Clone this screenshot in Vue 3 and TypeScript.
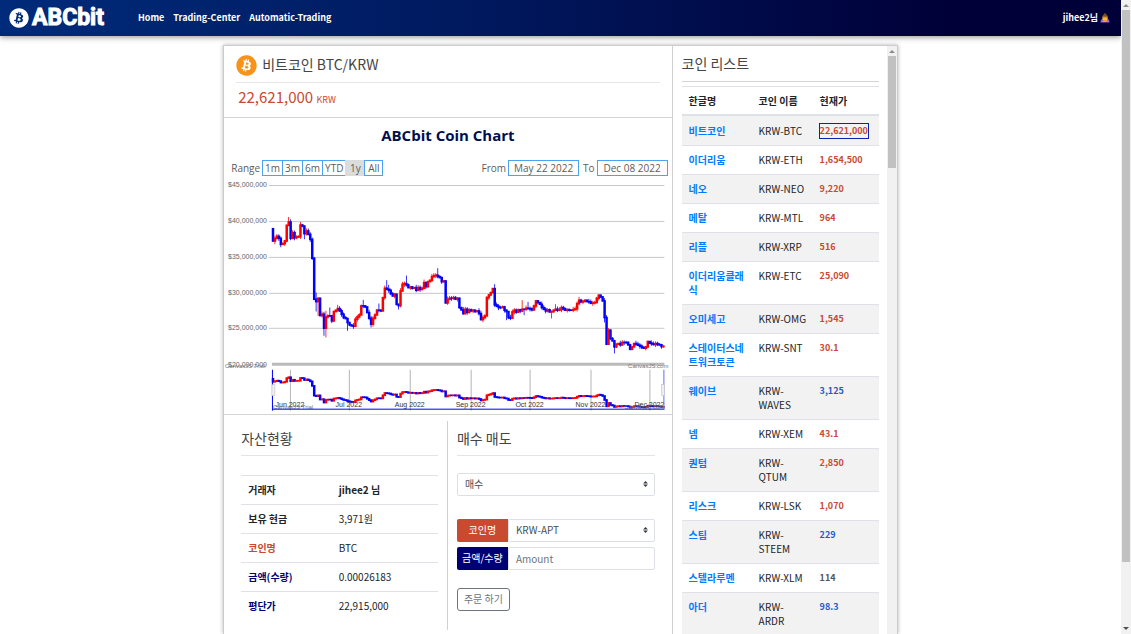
<script setup lang="ts">
import { computed, ref } from 'vue'

interface Coin {
  name: string
  market: string
  price: string
  trend: 'up' | 'down' | 'flat'
}

const coins: Coin[] = [
  { name: '비트코인', market: 'KRW-BTC', price: '22,621,000', trend: 'up' },
  { name: '이더리움', market: 'KRW-ETH', price: '1,654,500', trend: 'up' },
  { name: '네오', market: 'KRW-NEO', price: '9,220', trend: 'up' },
  { name: '메탈', market: 'KRW-MTL', price: '964', trend: 'up' },
  { name: '리플', market: 'KRW-XRP', price: '516', trend: 'up' },
  { name: '이더리움클래식', market: 'KRW-ETC', price: '25,090', trend: 'up' },
  { name: '오미세고', market: 'KRW-OMG', price: '1,545', trend: 'up' },
  { name: '스테이터스네트워크토큰', market: 'KRW-SNT', price: '30.1', trend: 'up' },
  { name: '웨이브', market: 'KRW-WAVES', price: '3,125', trend: 'down' },
  { name: '넴', market: 'KRW-XEM', price: '43.1', trend: 'up' },
  { name: '퀀텀', market: 'KRW-QTUM', price: '2,850', trend: 'up' },
  { name: '리스크', market: 'KRW-LSK', price: '1,070', trend: 'up' },
  { name: '스팀', market: 'KRW-STEEM', price: '229', trend: 'down' },
  { name: '스텔라루멘', market: 'KRW-XLM', price: '114', trend: 'flat' },
  { name: '아더', market: 'KRW-ARDR', price: '98.3', trend: 'down' },
]

const ranges = ['1m', '3m', '6m', 'YTD', '1y', 'All']
const activeRange = ref('1y')
const fromDate = ref('May 22 2022')
const toDate = ref('Dec 08 2022')
const side = ref('매수')
const orderCoin = ref('KRW-APT')
const amount = ref('')

// Daily closes as a depth below the top of the chart, three steps to a unit.
const closes = [
  180, 172, 166, 172, 190, 188, 180, 133, 123, 172, 155, 170, 168, 167, 132, 135, 158, 150, 160, 175,
  232, 355, 362, 352, 404, 400, 442, 408, 405, 405, 420, 392, 388, 383, 390, 400, 410, 413, 425, 432,
  435, 436, 415, 408, 402, 375, 375, 378, 395, 412, 430, 412, 402, 388, 388, 390, 350, 322, 325, 328,
  338, 345, 340, 370, 374, 330, 310, 308, 312, 320, 318, 322, 320, 328, 320, 325, 322, 305, 317, 302,
  298, 287, 284, 283, 287, 290, 302, 300, 366, 355, 352, 352, 350, 355, 352, 380, 387, 398, 385, 394,
  387, 390, 388, 392, 390, 398, 416, 410, 405, 350, 342, 335, 323, 372, 376, 380, 380, 378, 388, 392,
  410, 412, 393, 388, 394, 387, 390, 385, 385, 382, 383, 384, 387, 375, 360, 365, 370, 380, 385, 390,
  387, 393, 392, 388, 385, 388, 386, 380, 384, 388, 386, 388, 388, 386, 384, 368, 358, 363, 361, 358,
  362, 363, 367, 366, 365, 352, 343, 348, 360, 410, 490, 448, 473, 480, 498, 490, 488, 492, 485, 485,
  485, 492, 505, 498, 488, 490, 493, 496, 500, 502, 498, 482, 487, 489, 491, 488, 491, 492, 497, 496,
]

// Days whose high or low runs well past the body.
const peaks: Record<number, number> = {
  8: 108, 14: 123, 22: 335, 27: 390, 29: 380, 33: 372, 46: 357, 54: 368, 58: 298, 59: 312, 68: 284,
  77: 296, 84: 262, 113: 310, 127: 358, 130: 363, 144: 370, 156: 348, 172: 445,
}
const troughs: Record<number, number> = {
  1: 190, 4: 199, 16: 175, 22: 392, 23: 405, 26: 465, 27: 470, 38: 450, 41: 444, 50: 440, 64: 386,
  97: 402, 106: 419, 119: 418, 120: 415, 128: 403, 142: 413, 169: 425, 171: 490, 174: 518, 182: 509,
}

const candles = closes.map((close, i) => {
  const open = i === 0 ? 143 : closes[i - 1]
  const top = Math.min(open, close)
  const bottom = Math.max(open, close)
  return {
    x: 273 + i * 1.965,
    top,
    bottom,
    high: peaks[i] ?? top - 1 - ((i * 7) % 8),
    low: troughs[i] ?? bottom + 1 + ((i * 5) % 8),
    color: close < open ? '#ff0000' : '#0000ff',
  }
})

const chartY = (v: number) => 180 + v / 3
const navY = (v: number) => 381 + (v - 180) * 0.0793

const bodies = computed(() =>
  candles.map((c) => ({
    x: c.x - 1.2,
    y: chartY(c.top) - 0.7,
    h: (c.bottom - c.top) / 3 + 1.6,
    wickTop: chartY(c.high),
    wickBottom: chartY(c.low),
    cx: c.x,
    navTop: navY(c.top) - 0.8,
    navH: (c.bottom - c.top) * 0.0793 + 1.7,
    color: c.color,
  })),
)

const gridLines = [
  { y: 184, label: '$45,000,000' },
  { y: 220, label: '$40,000,000' },
  { y: 256, label: '$35,000,000' },
  { y: 292, label: '$30,000,000' },
  { y: 327, label: '$25,000,000' },
]
const months = [
  { x: 290, label: 'Jun 2022' },
  { x: 349, label: 'Jul 2022' },
  { x: 410, label: 'Aug 2022' },
  { x: 471, label: 'Sep 2022' },
  { x: 530, label: 'Oct 2022' },
  { x: 591, label: 'Nov 2022' },
  { x: 650, label: 'Dec 2022' },
]

const bitcoin =
  'M504 256c0 136.967-111.033 248-248 248S8 392.967 8 256 119.033 8 256 8s248 111.033 248 248zm-141.651-35.33c4.937-32.999-20.191-50.739-54.55-62.573l11.146-44.702-27.213-6.781-10.851 43.524c-7.154-1.783-14.502-3.464-21.803-5.13l10.929-43.81-27.198-6.781-11.153 44.686c-5.922-1.349-11.735-2.682-17.377-4.084l.031-.14-37.53-9.37-7.239 29.062s20.191 4.627 19.765 4.913c11.022 2.751 13.014 10.044 12.68 15.825l-12.696 50.925c.76.194 1.744.473 2.829.907-.907-.225-1.876-.473-2.876-.713l-17.796 71.338c-1.349 3.348-4.767 8.37-12.471 6.464.271.395-19.78-4.937-19.78-4.937l-13.51 31.147 35.414 8.827c6.588 1.651 13.045 3.379 19.4 5.006l-11.262 45.213 27.182 6.781 11.153-44.733a1038.209 1038.209 0 0 0 21.687 5.627l-11.115 44.523 27.213 6.781 11.262-45.128c46.404 8.781 81.299 5.239 95.986-36.727 11.834-33.79-.589-53.281-25.004-65.991 17.78-4.098 31.174-15.792 34.747-39.949zm-62.177 87.179c-8.41 33.79-65.308 15.523-83.755 10.943l14.944-59.899c18.446 4.603 77.6 13.717 68.811 48.956zm8.417-87.667c-7.673 30.736-55.031 15.12-70.393 11.292l13.548-54.327c15.363 3.828 64.836 10.973 56.845 43.035z'
</script>

<template>
  <div class="page">
    <div class="view">
      <header class="navbar">
        <a class="brand" href="#" aria-label="ABCbit">
          <svg class="brand-mark" viewBox="0 0 512 512" aria-hidden="true"><path :d="bitcoin" fill="#fff" /></svg>
          <span class="brand-name">ABCbit</span>
        </a>
        <nav class="links">
          <a href="#">Home</a>
          <a href="#">Trading-Center</a>
          <a href="#">Automatic-Trading</a>
        </nav>
        <a class="user" href="#">
          <span>jihee2님</span>
          <svg viewBox="0 0 20 20" aria-hidden="true">
            <path d="M1 19c0-6 3-8 5-8h8c2 0 5 2 5 8z" fill="#8c5fb5" />
            <circle cx="10" cy="3" r="2.6" fill="#7a4a2e" />
            <path d="M4 11c-1-6 2-8 6-8s7 2 6 8z" fill="#7a4a2e" />
            <circle cx="10" cy="11" r="5" fill="#fbb52f" />
            <path d="M5 9c1-3 8-4 10 0-3-1-6-1-10 0z" fill="#7a4a2e" />
            <path d="M2 18l5-3h6l5 3z" fill="#f39a26" />
          </svg>
        </a>
      </header>

      <main class="card">
        <section class="left">
          <div class="summary">
            <h1 class="pair">
              <svg viewBox="0 0 512 512" aria-hidden="true"><path :d="bitcoin" fill="#f7931a" /></svg>
              <span>비트코인 BTC/KRW</span>
            </h1>
            <p class="quote">22,621,000 <small>KRW</small></p>
          </div>

          <div class="chart">
            <h2 class="chart-title">ABCbit Coin Chart</h2>
            <div class="chart-tools">
              <div class="ranges" role="group" aria-label="Range">
                <span class="tool-label">Range</span>
                <button
                  v-for="r in ranges"
                  :key="r"
                  type="button"
                  :class="{ active: r === activeRange }"
                  @click="activeRange = r"
                >{{ r }}</button>
              </div>
              <div class="dates">
                <label for="from">From</label>
                <input id="from" v-model="fromDate" type="text" />
                <label for="to">To</label>
                <input id="to" v-model="toDate" type="text" />
              </div>
            </div>
            <svg class="plot" viewBox="224 178 448 234" role="img" aria-label="BTC price candles">
              <g v-for="g in gridLines" :key="g.label">
                <rect x="269" :y="g.y" width="396" height="1" fill="#c8c8c8" />
                <text x="267" :y="g.y + 2" text-anchor="end" class="axis">{{ g.label }}</text>
              </g>
              <text x="267" y="366" text-anchor="end" class="axis">$20,000,000</text>
              <rect x="272" y="362" width="393" height="3" fill="#bbb" />
              <text x="225" y="367" class="credit">CanvasJS Trial</text>
              <text x="669" y="367" text-anchor="end" class="credit">CanvasJS.com</text>
              <g v-for="(b, i) in bodies" :key="i" :fill="b.color">
                <rect :x="b.cx - 0.4" :y="b.wickTop" width="0.8" :height="b.wickBottom - b.wickTop" />
                <rect :x="b.x" :y="b.y" width="2.5" :height="b.h" />
              </g>
              <rect v-for="m in months" :key="m.label" :x="m.x" y="369" width="1" height="41" fill="#b4b4b4" />
              <rect v-for="(b, i) in bodies" :key="'n' + i" :x="b.x" :y="b.navTop" width="2.5" :height="b.navH" :fill="b.color" />
              <text v-for="m in months" :key="'t' + m.label" :x="m.x" y="406" text-anchor="middle" class="month">{{ m.label }}</text>
              <text x="273" y="408" class="credit">CanvasJS Trial</text>
              <text x="665" y="408" text-anchor="end" class="credit">CanvasJS.com</text>
              <rect x="272" y="369" width="1" height="41" fill="#0000ff" />
              <rect x="272" y="408" width="393" height="1" fill="#0000ff" />
              <rect x="664" y="369" width="1" height="40" fill="#6a6aff" />
              <rect x="272" y="384" width="3" height="11" fill="#eee" stroke="#bbb" stroke-width="0.5" />
              <rect x="662" y="384" width="3" height="11" fill="#eee" stroke="#bbb" stroke-width="0.5" />
            </svg>
          </div>

          <div class="bottom">
            <section class="assets">
              <h2 class="heading">자산현황</h2>
              <table>
                <tbody>
                  <tr><th scope="row">거래자</th><td><b>jihee2 님</b></td></tr>
                  <tr><th scope="row">보유 현금</th><td>3,971원</td></tr>
                  <tr><th scope="row" class="red">코인명</th><td>BTC</td></tr>
                  <tr><th scope="row" class="navy">금액(수량)</th><td>0.00026183</td></tr>
                  <tr><th scope="row" class="navy">평단가</th><td>22,915,000</td></tr>
                </tbody>
              </table>
            </section>

            <form class="order" @submit.prevent>
              <h2 class="heading">매수 매도</h2>
              <div class="field side">
                <select v-model="side" aria-label="매수 매도">
                  <option>매수</option>
                  <option>매도</option>
                </select>
                <svg class="caret" viewBox="0 0 4 5" aria-hidden="true"><path d="M2 0L0 2h4zM2 5L0 3h4z" fill="#343a40" /></svg>
              </div>
              <div class="group">
                <label for="coin" class="bg-red">코인명</label>
                <div class="field">
                  <select id="coin" v-model="orderCoin">
                    <option>KRW-APT</option>
                    <option v-for="c in coins" :key="c.market">{{ c.market }}</option>
                  </select>
                  <svg class="caret" viewBox="0 0 4 5" aria-hidden="true"><path d="M2 0L0 2h4zM2 5L0 3h4z" fill="#343a40" /></svg>
                </div>
              </div>
              <div class="group">
                <label for="amount" class="bg-navy">금액/수량</label>
                <div class="field"><input id="amount" v-model="amount" type="text" placeholder="Amount" /></div>
              </div>
              <button class="submit" type="submit">주문 하기</button>
            </form>
          </div>
        </section>

        <section class="list">
          <div class="list-body">
            <h2 class="heading">코인 리스트</h2>
            <table>
              <colgroup><col class="c-name" /><col class="c-market" /><col /></colgroup>
              <thead>
                <tr><th scope="col">한글명</th><th scope="col">코인 이름</th><th scope="col">현재가</th></tr>
              </thead>
              <tbody>
                <tr v-for="(c, i) in coins" :key="c.market">
                  <td><a href="#">{{ c.name }}</a></td>
                  <td class="market">{{ c.market }}</td>
                  <td><span class="price" :class="[c.trend, { flash: i === 0 }]">{{ c.price }}</span></td>
                </tr>
              </tbody>
            </table>
          </div>
          <div class="scrollbar inner" aria-hidden="true"><i class="arrow"></i><i class="thumb"></i></div>
        </section>
      </main>
    </div>
    <div class="scrollbar outer" aria-hidden="true"><i class="arrow"></i><i class="thumb"></i><i class="arrow down"></i></div>
  </div>
</template>

<style>
html,
body {
  margin: 0;
  overflow: hidden;
}
</style>

<style scoped>
* {
  box-sizing: border-box;
}
.page {
  display: flex;
  height: 100vh;
  overflow: hidden;
  background: #fff;
  color: #212529;
  font: 10px/14px "Noto Sans CJK KR", sans-serif;
}
h1,
h2,
p {
  margin: 0;
}
a {
  text-decoration: none;
}
button,
input,
select {
  font: inherit;
  color: inherit;
}
.view {
  flex: 1;
  min-width: 0;
  display: flex;
  flex-direction: column;
}
.navbar {
  display: flex;
  align-items: center;
  flex: none;
  height: 36px;
  padding: 0 11px 0 9px;
  background: linear-gradient(90deg, #002b7a, #001a60 40%, #000038 85%);
  box-shadow: 0 1px 6px rgba(0, 0, 0, 0.45);
}
.navbar a {
  color: #fff;
  font-size: 9px;
  font-weight: 700;
}
.brand {
  display: flex;
  align-items: center;
  gap: 3px;
  width: 129px;
}
.brand-mark {
  width: 20px;
  height: 20px;
}
.brand-name {
  font: 700 23px/34px "Liberation Sans Narrow", "Roboto", sans-serif;
  -webkit-text-stroke: 1px #fff;
}
.links {
  display: flex;
  gap: 9px;
}
.user {
  display: flex;
  align-items: center;
  gap: 2px;
  margin-left: auto;
}
.user svg {
  width: 10px;
  height: 10px;
}
.card {
  flex: 1;
  min-height: 0;
  display: grid;
  grid-template-columns: 2fr 1fr;
  width: calc(60% + 2px);
  margin: 9px auto 0;
  border: 1px solid #ccc;
  border-bottom: 0;
  box-shadow: 0 0 4px rgba(0, 0, 0, 0.3);
  overflow: hidden;
}
.left {
  border-right: 1px solid #d0d0d0;
  min-width: 0;
}
.summary {
  height: 72px;
  padding: 6px 12px 0;
  border-bottom: 1px solid #d4d4d4;
}
.pair {
  display: flex;
  align-items: center;
  gap: 5px;
  height: 31px;
  padding-bottom: 3px;
  border-bottom: 1px solid #e6e6e6;
  color: #444;
  font-size: 14px;
  font-weight: 400;
}
.pair span {
  padding-bottom: 4px;
}
.pair svg {
  width: 21px;
  height: 21px;
}
.quote {
  padding: 5px 2px;
  color: #c84a31;
  font-size: 15px;
  line-height: 18px;
}
.quote small {
  font-size: 9px;
}
.chart {
  padding-bottom: 1px;
  border-bottom: 1px solid #d4d4d4;
  font-family: "Open Sans", sans-serif;
}
.chart-title {
  padding-top: 5px;
  color: #000f4f;
  font-size: 15px;
  line-height: 24px;
  text-align: center;
}
.chart-tools {
  display: flex;
  justify-content: space-between;
  height: 32px;
  padding: 13px 4px 0 7px;
  color: #5c5c5c;
}
.ranges,
.dates {
  display: flex;
}
.tool-label {
  padding-right: 2px;
  line-height: 16px;
}
.ranges button {
  min-width: 19px;
  height: 16px;
  padding: 0 2px;
  border: 1px solid #4ba3f0;
  border-right-width: 0;
  background: #fff;
  line-height: 12px;
}
.ranges button:last-child {
  border-right-width: 1px;
}
.ranges button.active {
  border-color: #dcdcdc;
  background: #dcdcdc;
}
.dates label {
  padding-right: 2px;
  line-height: 16px;
}
.dates input {
  width: 71px;
  height: 16px;
  padding: 0;
  border: 1px solid #4ba3f0;
  background: #fff;
  text-align: center;
}
.dates input + label {
  padding-left: 4px;
}
.plot {
  display: block;
  width: 100%;
}
.axis,
.month {
  font: 7px "Liberation Sans", sans-serif;
  fill: #666;
}
.month {
  fill: #333;
}
.credit {
  font: 6px "Liberation Sans", sans-serif;
  fill: #777;
}
.bottom {
  display: grid;
  grid-template-columns: 1fr 1fr;
  padding-top: 6px;
}
.heading {
  color: #444;
  font-size: 14px;
  line-height: 20px;
  font-weight: 400;
  border-bottom: 1px solid #e4e4e4;
}
.assets {
  height: 209px;
  padding: 7px 9px 0 17px;
  border-right: 1px solid #d0d0d0;
}
.assets .heading,
.order .heading {
  height: 28px;
}
table {
  width: 100%;
  table-layout: fixed;
  border-collapse: separate;
  border-spacing: 0;
}
th,
td {
  padding: 7px;
  border-top: 1px solid #dee2e6;
  text-align: left;
  vertical-align: top;
}
.assets table {
  margin-top: 19px;
}
.assets th {
  width: 46%;
}
.red {
  color: #c84a31;
}
.navy {
  color: #000075;
}
.order {
  padding: 7px 17px 0 9px;
}
.field {
  position: relative;
  flex: 1;
  min-width: 0;
  height: 23px;
}
.field select,
.field input {
  appearance: none;
  display: block;
  width: 100%;
  height: 100%;
  padding: 0 7px;
  border: 1px solid #dde0e4;
  border-radius: 2px;
  background: #fff;
  color: #495057;
  outline: 0;
}
.field input::placeholder {
  color: #6c757d;
  opacity: 1;
}
.caret {
  position: absolute;
  right: 7px;
  top: 8px;
  width: 5px;
  height: 6px;
  pointer-events: none;
}
.side {
  margin: 17px 0 23px;
}
.group {
  display: flex;
  margin-bottom: 5px;
}
.group label {
  flex: none;
  width: 51px;
  border-radius: 2px 0 0 2px;
  color: #fff;
  line-height: 22px;
  text-align: center;
}
.bg-red {
  background: #c84a31;
}
.bg-navy {
  background: #000075;
}
.submit {
  height: 23px;
  margin-top: 13px;
  padding: 0 6px;
  border: 1px solid #6c757d;
  border-radius: 3px;
  background: #fff;
  color: #6c757d;
}
.list {
  display: flex;
  min-width: 0;
  min-height: 0;
}
.list-body {
  flex: 1;
  min-width: 0;
  padding: 7px 8px 0 9px;
}
.list .heading {
  height: 29px;
  border-color: #d4d4d4;
}
.list table {
  margin-top: 4px;
}
.c-name {
  width: 70px;
}
.c-market {
  width: 61px;
}
.list thead th {
  padding-bottom: 6px;
  border-bottom: 2px solid #dee2e6;
}
.list tbody tr:first-child td {
  border-top: 0;
  padding-top: 8px;
}
.list tbody tr:nth-child(odd) {
  background: #f2f2f2;
}
.list td a {
  color: #007bff;
  font-weight: 700;
}
.list .market {
  padding-right: 4px;
}
.price {
  display: inline-block;
  vertical-align: top;
  font-size: 9px;
  font-weight: 700;
}
.up {
  color: #c84a31;
}
.down {
  color: #1f5bc0;
}
.flat {
  color: #555;
}
.flash {
  outline: 1px solid #0d22b0;
}
.scrollbar {
  flex: none;
  display: flex;
  flex-direction: column;
  width: 10px;
  background: #f1f1f1;
}
.arrow {
  height: 10px;
  display: grid;
  place-items: center;
}
.arrow::before {
  content: "";
  border: 3px solid transparent;
  border-top-width: 0;
  border-bottom-color: #8a8a8a;
}
.arrow.down {
  margin-top: auto;
  transform: rotate(180deg);
}
.arrow.down::before {
  border-bottom-color: #505050;
}
.thumb {
  height: 19%;
  margin: 0 1px;
  background: #c1c1c1;
}
.outer .thumb {
  height: 87%;
}
</style>
